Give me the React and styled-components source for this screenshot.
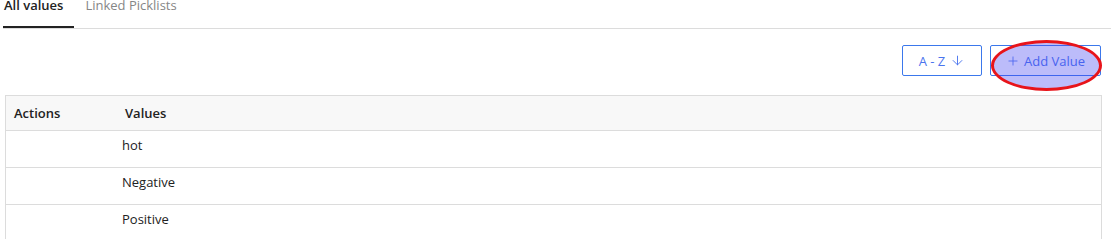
import React from "react";
import styled, { createGlobalStyle } from "styled-components";
import { ArrowDown, Plus } from "lucide-react";

const values = ["hot", "Negative", "Positive"];

const GlobalStyle = createGlobalStyle`
  body {
    margin: 0;
    background: #fff;
    font-family: "Open Sans", "Noto Sans", sans-serif;
    color: #222;
  }
`;

export default function App() {
  return (
    <Page>
      <GlobalStyle />
      <Tabs>
        <Tab active>All values</Tab>
        <Tab>Linked Picklists</Tab>
      </Tabs>
      <Toolbar>
        <Button>
          A - Z <ArrowDown size={15} strokeWidth={1.5} />
        </Button>
        <Highlight>
          <Button wide>
            <Plus size={14} strokeWidth={1.4} /> Add Value
          </Button>
          <Circle />
        </Highlight>
      </Toolbar>
      <Table>
        <HeadRow>
          <HeadCell>Actions</HeadCell>
          <HeadCell indent>Values</HeadCell>
        </HeadRow>
        {values.map((v) => (
          <Row key={v}>
            <Cell />
            <Cell>{v}</Cell>
          </Row>
        ))}
      </Table>
    </Page>
  );
}

const Page = styled.div`
  width: 1111px;
  height: 239px;
  overflow: hidden;
`;

const Tabs = styled.div`
  display: flex;
  gap: 10px;
  margin: -3px 0 0 3px;
  border-bottom: 1px solid #dcdcdc;
`;

const Tab = styled.div`
  font-size: 13px;
  line-height: 16px;
  padding: 0 11px 13px 1px;
  font-weight: ${(p) => (p.active ? 600 : 400)};
  color: ${(p) => (p.active ? "#222" : "#868686")};
  border-bottom: 2px solid ${(p) => (p.active ? "#222" : "transparent")};
`;

const Toolbar = styled.div`
  display: flex;
  justify-content: flex-end;
  gap: 8px;
  padding: 16px 10px 0 0;
`;

const Button = styled.button`
  display: flex;
  align-items: center;
  justify-content: center;
  gap: ${(p) => (p.wide ? "4px" : "5px")};
  width: ${(p) => (p.wide ? "111px" : "80px")};
  height: 31px;
  background: #fff;
  border: 1px solid #3b78ec;
  border-radius: 2px;
  color: #4a74ee;
  font-family: "Open Sans", sans-serif;
  font-size: 13px;
  padding: 0;
`;

const Highlight = styled.div`
  position: relative;
`;

const Circle = styled.div`
  position: absolute;
  left: 1px;
  top: -5px;
  width: 111px;
  height: 51px;
  box-sizing: border-box;
  border: 3px solid #e8141a;
  border-radius: 50%;
  background: rgba(70, 70, 240, 0.36);
  pointer-events: none;
`;

const Table = styled.div`
  margin: 19px 9px 0 5px;
  border: 1px solid #dcdcdc;
  border-bottom: none;
`;

const HeadRow = styled.div`
  display: grid;
  grid-template-columns: 108px 1fr;
  height: 34px;
  background: #f8f8f8;
  border-bottom: 1px solid #dcdcdc;
  align-items: center;
`;

const HeadCell = styled.div`
  font-size: 13px;
  font-weight: 600;
  padding-left: ${(p) => (p.indent ? "11px" : "8px")};
`;

const Row = styled.div`
  display: grid;
  grid-template-columns: 108px 1fr;
  height: 36px;
  border-bottom: 1px solid #dcdcdc;
  align-items: center;
`;

const Cell = styled.div`
  font-size: 13px;
  padding-left: 8px;
  padding-bottom: 8px;
`;
